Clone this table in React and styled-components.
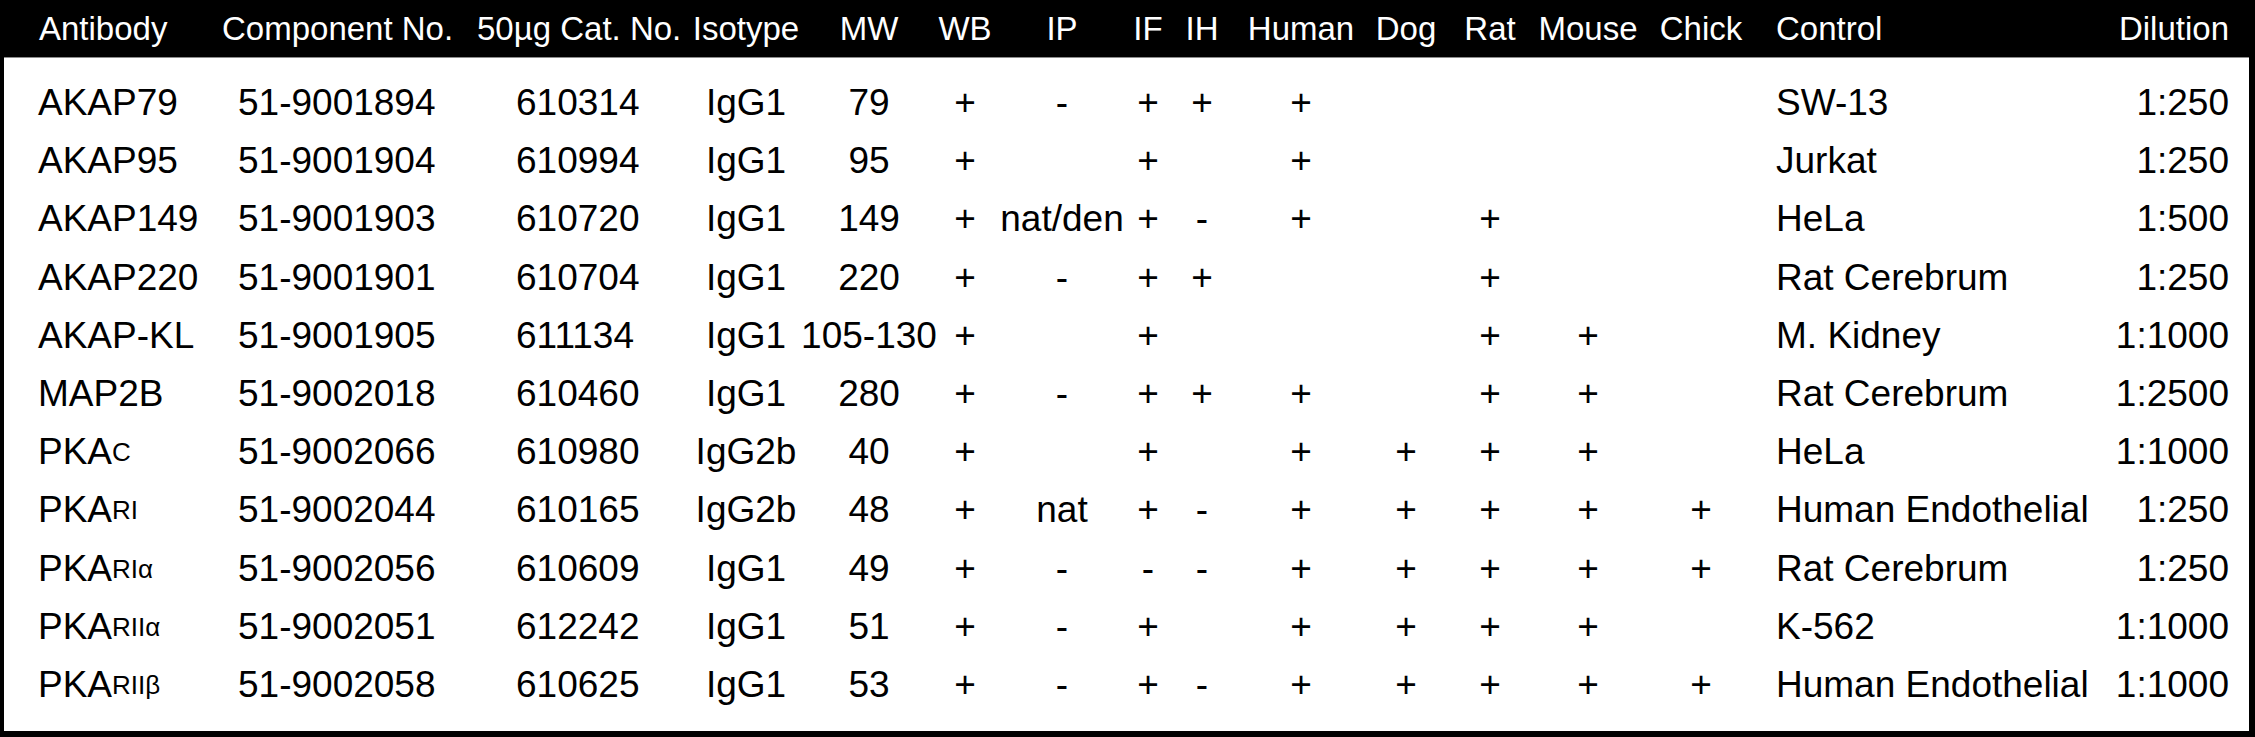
import React from 'react'
import styled, { createGlobalStyle } from 'styled-components'

const GlobalStyle = createGlobalStyle`
  html, body {
    margin: 0;
    padding: 0;
    background: #fff;
  }
  body {
    font-family: "Liberation Sans", Arial, Helvetica, sans-serif;
    color: #000;
  }
`

// track widths are picked so the centred columns land on the same x as the print
const columns = [
  { label: 'Antibody', w: 211, align: 'left', head: 35, cell: 34 },
  { label: 'Component No.', w: 255, align: 'left', head: 7, cell: 23 },
  { label: '50µg Cat. No.', w: 230, align: 'left', head: 7, cell: 46 },
  { label: 'Isotype', w: 92, align: 'center' },
  { label: 'MW', w: 154, align: 'center' },
  { label: 'WB', w: 38, align: 'center' },
  { label: 'IP', w: 156, align: 'center' },
  { label: 'IF', w: 16, align: 'center' },
  { label: 'IH', w: 92, align: 'center' },
  { label: 'Human', w: 106, align: 'center' },
  { label: 'Dog', w: 104, align: 'center' },
  { label: 'Rat', w: 64, align: 'center' },
  { label: 'Mouse', w: 132, align: 'center' },
  { label: 'Chick', w: 94, align: 'center' },
  { label: 'Control', w: 352, align: 'left', head: 28, cell: 28 },
  { label: 'Dilution', w: 149, align: 'right', head: 20, cell: 20 },
]

const tracks = columns.map(c => c.w + 'px').join(' ')

const Frame = styled.div`
  width: 2255px;
  height: 737px;
  box-sizing: border-box;
  background: #000;
  padding: 0 6px 6px 4px;
`

const Head = styled.div`
  display: grid;
  grid-template-columns: ${tracks};
  height: 57px;
  color: #fff;
  font-size: 33px;
  line-height: 58px;
`

const Body = styled.div`
  display: grid;
  grid-template-columns: ${tracks};
  grid-auto-rows: 58.2px;
  background: #fff;
  border-top: 1px solid #8c8c8c;
  padding: 16px 0;
  height: 674px;
  box-sizing: border-box;
  font-size: 37px;
  line-height: 58.2px;
`

const Row = styled.div`
  display: contents;
`

const Cell = styled.div`
  display: flex;
  white-space: nowrap;
  justify-content: ${p => p.$align === 'center' ? 'center' : p.$align === 'right' ? 'flex-end' : 'flex-start'};
  padding-left: ${p => p.$align === 'left' ? p.$pad : 0}px;
  padding-right: ${p => p.$align === 'right' ? p.$pad : 0}px;
`

const Sub = styled.span`
  font-size: 26px;
`

const rows = [
  [<>AKAP79</>, '51-9001894', '610314', 'IgG1', '79', '+', '-', '+', '+', '+', '', '', '', '', 'SW-13', '1:250'],
  [<>AKAP95</>, '51-9001904', '610994', 'IgG1', '95', '+', '', '+', '', '+', '', '', '', '', 'Jurkat', '1:250'],
  [<>AKAP149</>, '51-9001903', '610720', 'IgG1', '149', '+', 'nat/den', '+', '-', '+', '', '+', '', '', 'HeLa', '1:500'],
  [<>AKAP220</>, '51-9001901', '610704', 'IgG1', '220', '+', '-', '+', '+', '', '', '+', '', '', 'Rat Cerebrum', '1:250'],
  [<>AKAP-KL</>, '51-9001905', '611134', 'IgG1', '105-130', '+', '', '+', '', '', '', '+', '+', '', 'M. Kidney', '1:1000'],
  [<>MAP2B</>, '51-9002018', '610460', 'IgG1', '280', '+', '-', '+', '+', '+', '', '+', '+', '', 'Rat Cerebrum', '1:2500'],
  [<>PKA<Sub>C</Sub></>, '51-9002066', '610980', 'IgG2b', '40', '+', '', '+', '', '+', '+', '+', '+', '', 'HeLa', '1:1000'],
  [<>PKA<Sub>RI</Sub></>, '51-9002044', '610165', 'IgG2b', '48', '+', 'nat', '+', '-', '+', '+', '+', '+', '+', 'Human Endothelial', '1:250'],
  [<>PKA<Sub>RIα</Sub></>, '51-9002056', '610609', 'IgG1', '49', '+', '-', '-', '-', '+', '+', '+', '+', '+', 'Rat Cerebrum', '1:250'],
  [<>PKA<Sub>RIIα</Sub></>, '51-9002051', '612242', 'IgG1', '51', '+', '-', '+', '', '+', '+', '+', '+', '', 'K-562', '1:1000'],
  [<>PKA<Sub>RIIβ</Sub></>, '51-9002058', '610625', 'IgG1', '53', '+', '-', '+', '-', '+', '+', '+', '+', '+', 'Human Endothelial', '1:1000'],
]

function App() {
  return (
    <>
      <GlobalStyle />
      <Frame>
        <Head>
          {columns.map(c => (
            <Cell key={c.label} $align={c.align} $pad={c.head || 0}>
              {c.label}
            </Cell>
          ))}
        </Head>
        <Body>
          {rows.map((r, i) => (
            <Row key={i}>
              {r.map((v, j) => (
                <Cell key={j} $align={columns[j].align} $pad={columns[j].cell || 0}>
                  {v}
                </Cell>
              ))}
            </Row>
          ))}
        </Body>
      </Frame>
    </>
  )
}

export default App
